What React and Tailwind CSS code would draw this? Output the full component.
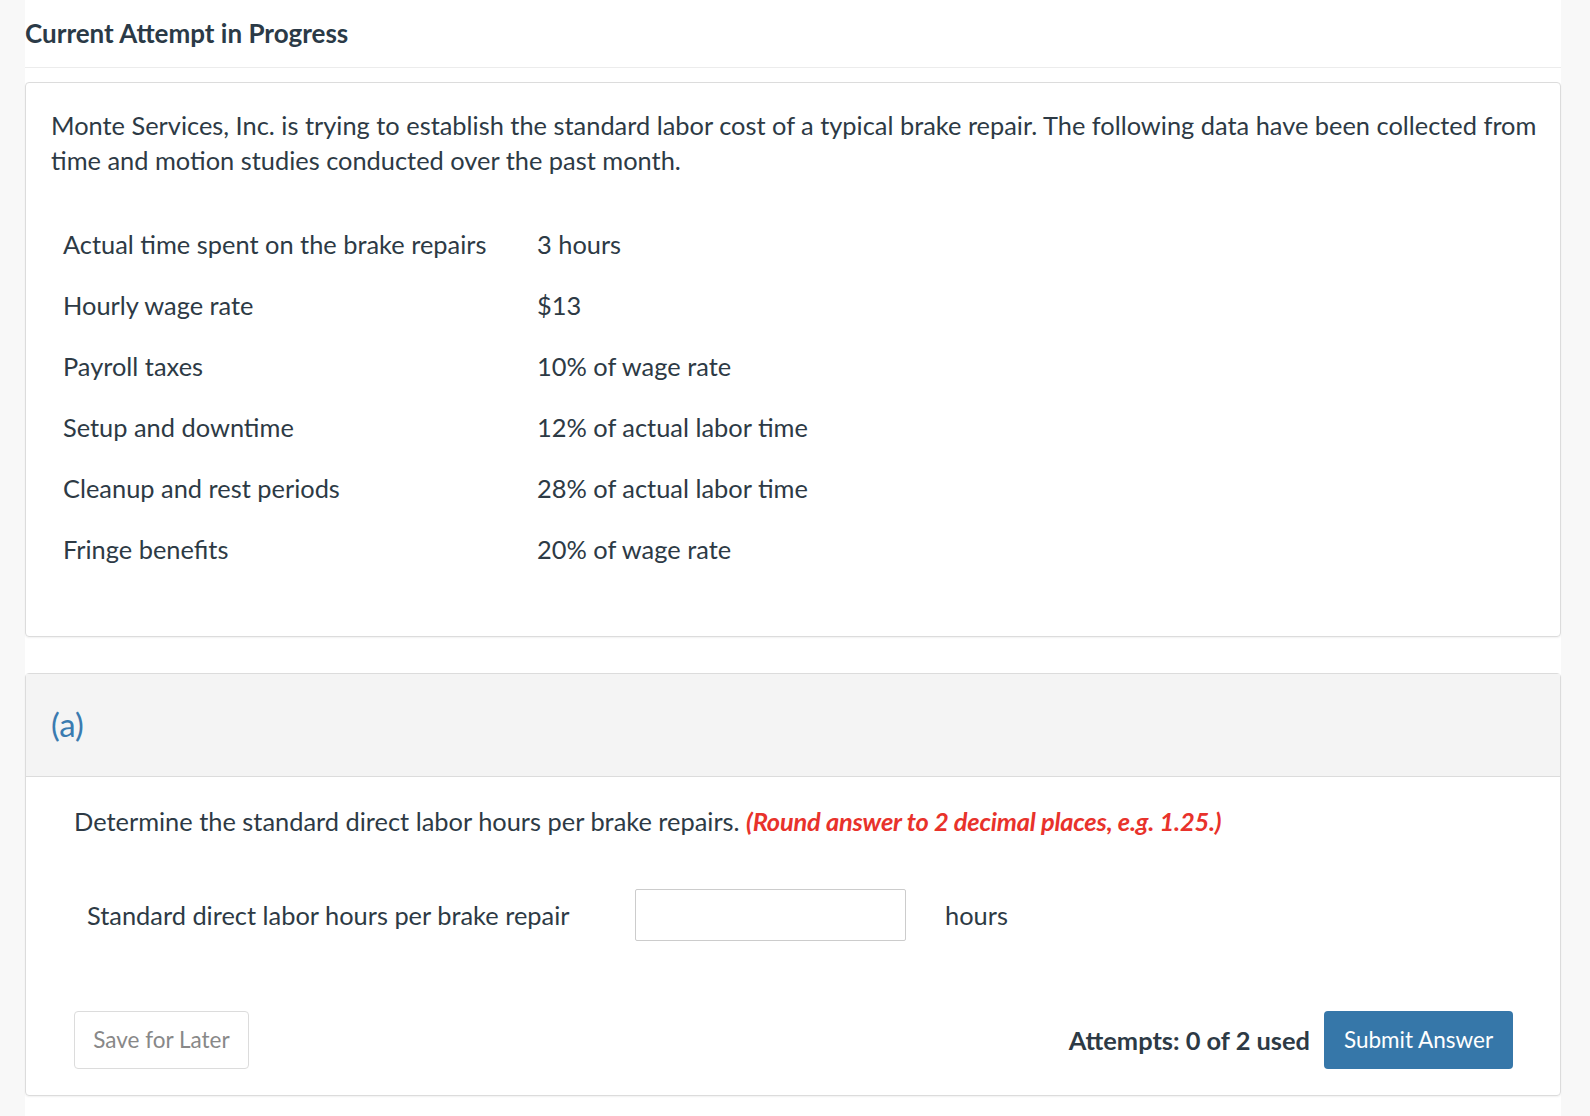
const rows = [
  ['Actual time spent on the brake repairs', '3 hours'],
  ['Hourly wage rate', '$13'],
  ['Payroll taxes', '10% of wage rate'],
  ['Setup and downtime', '12% of actual labor time'],
  ['Cleanup and rest periods', '28% of actual labor time'],
  ['Fringe benefits', '20% of wage rate'],
]

export default function App() {
  return (
    <div
      className="min-h-screen bg-[#f8f8f8] pl-[25px] pr-[29px] text-[#2d3a45]"
      style={{ fontFamily: 'Lato, "Open Sans", sans-serif' }}
    >
      <div className="bg-white pb-[20px]">
        {/* Header */}
        <div className="h-[68px] border-b border-[#ececec] flex items-center">
          <h1 className="text-[26px] font-bold text-[#2b3a47] -mt-[1px]">Current Attempt in Progress</h1>
        </div>

        {/* Question card */}
        <div className="mt-[14px] border border-[#dcdcdc] rounded-[4px] shadow-[0_1px_2px_rgba(0,0,0,0.06)] pl-[25px] pr-[8px] pt-[25px] pb-[56px]">
          <p className="text-[25.4px] leading-[35px]">
            Monte Services, Inc. is trying to establish the standard labor cost of a typical brake repair. The following data have been collected from time and motion studies conducted over the past month.
          </p>
          <table className="mt-[36px] text-[25.4px]">
            <tbody>
              {rows.map(([label, value]) => (
                <tr key={label} className="h-[61px]">
                  <td className="pl-[12px] w-[486px]">{label}</td>
                  <td>{value}</td>
                </tr>
              ))}
            </tbody>
          </table>
        </div>

        {/* Part (a) */}
        <div className="mt-[36px] border border-[#dcdcdc] rounded-[4px] shadow-[0_1px_2px_rgba(0,0,0,0.06)]">
          <div className="h-[103px] bg-[#f4f4f4] border-b border-[#dcdcdc] flex items-center pl-[25px]">
            <span className="text-[33px] text-[#3a7bb0]">(a)</span>
          </div>
          <div className="pl-[48px] pr-[47px] pt-[27px] pb-[26px]">
            <p className="text-[25.4px] leading-[35px]">
              Determine the standard direct labor hours per brake repairs.{' '}
              <span className="text-[#e8322b] font-bold italic tracking-[-0.2px]">(Round answer to 2 decimal places, e.g. 1.25.)</span>
            </p>
            <div className="mt-[50px] flex items-center pl-[13px]">
              <span className="text-[25.4px] w-[548px]">Standard direct labor hours per brake repair</span>
              <input
                type="text"
                className="w-[271px] h-[52px] border border-[#cccccc] rounded-[2px] px-3 text-[22px] outline-none"
              />
              <span className="text-[25.4px] ml-[39px]">hours</span>
            </div>
            <div className="mt-[70px] flex items-center justify-between">
              <button className="w-[175px] h-[58px] border border-[#dcdcdc] rounded-[4px] text-[22.5px] text-[#888888] bg-white">
                Save for Later
              </button>
              <div className="flex items-center gap-[14px]">
                <span className="text-[25.4px] font-bold">Attempts: 0 of 2 used</span>
                <button className="w-[189px] h-[58px] rounded-[4px] bg-[#3677a9] text-white text-[22.5px]">
                  Submit Answer
                </button>
              </div>
            </div>
          </div>
        </div>
      </div>
    </div>
  )
}
